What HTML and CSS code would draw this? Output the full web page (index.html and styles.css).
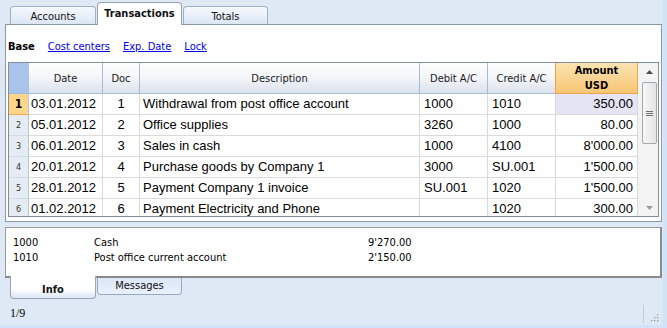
FILE: index.html
```html
<!DOCTYPE html>
<html>
<head>
<meta charset="utf-8">
<title>Transactions</title>
<link rel="stylesheet" href="styles.css">
</head>
<body>
<div class="app">
  <div class="tabs-top">
    <div class="tab w86">Accounts</div>
    <div class="tab active">Transactions</div>
    <div class="tab">Totals</div>
  </div>
  <div class="main-panel">
    <div class="views">
      <span class="view current">Base</span>
      <span class="view link">Cost centers</span>
      <span class="view link">Exp. Date</span>
      <span class="view link">Lock</span>
    </div>
    <div class="grid">
      <div class="sheet">
        <div class="row head">
          <div class="c rh corner"></div>
          <div class="c">Date</div>
          <div class="c">Doc</div>
          <div class="c">Description</div>
          <div class="c">Debit A/C</div>
          <div class="c pre-amt">Credit A/C</div>
          <div class="c amt-h">Amount<br>USD</div>
        </div>
        <div class="row">
          <div class="c rh cur">1</div>
          <div class="c date">03.01.2012</div>
          <div class="c doc">1</div>
          <div class="c desc">Withdrawal from post office account</div>
          <div class="c acc">1000</div>
          <div class="c acc">1010</div>
          <div class="c amt sel">350.00</div>
        </div>
        <div class="row">
          <div class="c rh">2</div>
          <div class="c date">05.01.2012</div>
          <div class="c doc">2</div>
          <div class="c desc">Office supplies</div>
          <div class="c acc">3260</div>
          <div class="c acc">1000</div>
          <div class="c amt">80.00</div>
        </div>
        <div class="row">
          <div class="c rh">3</div>
          <div class="c date">06.01.2012</div>
          <div class="c doc">3</div>
          <div class="c desc">Sales in cash</div>
          <div class="c acc">1000</div>
          <div class="c acc">4100</div>
          <div class="c amt">8'000.00</div>
        </div>
        <div class="row">
          <div class="c rh">4</div>
          <div class="c date">20.01.2012</div>
          <div class="c doc">4</div>
          <div class="c desc">Purchase goods by Company 1</div>
          <div class="c acc">3000</div>
          <div class="c acc">SU.001</div>
          <div class="c amt">1'500.00</div>
        </div>
        <div class="row">
          <div class="c rh">5</div>
          <div class="c date">28.01.2012</div>
          <div class="c doc">5</div>
          <div class="c desc">Payment Company 1 invoice</div>
          <div class="c acc">SU.001</div>
          <div class="c acc">1020</div>
          <div class="c amt">1'500.00</div>
        </div>
        <div class="row">
          <div class="c rh">6</div>
          <div class="c date">01.02.2012</div>
          <div class="c doc">6</div>
          <div class="c desc">Payment Electricity and Phone</div>
          <div class="c acc"></div>
          <div class="c acc">1020</div>
          <div class="c amt">300.00</div>
        </div>
      </div>
      <div class="vscroll">
        <div class="sb-btn up"><svg width="7" height="4" viewBox="0 0 7 4"><path d="M0 4 L3.5 0 L7 4 Z" fill="#4a4a4a"/></svg></div>
        <div class="sb-track">
          <div class="sb-thumb">
            <svg width="7" height="5" viewBox="0 0 7 5"><path d="M0 0.5H7M0 2.5H7M0 4.5H7" stroke="#6e6e6e" stroke-width="1"/></svg>
          </div>
        </div>
        <div class="sb-btn down"><svg width="7" height="4" viewBox="0 0 7 4"><path d="M0 0 L3.5 4 L7 0 Z" fill="#9a9a9a"/></svg></div>
      </div>
    </div>
  </div>
  <div class="info-panel">
    <div class="info-line"><span>1000</span><span>Cash</span><span>9'270.00</span></div>
    <div class="info-line"><span>1010</span><span>Post office current account</span><span>2'150.00</span></div>
  </div>
  <div class="tabs-bottom">
    <div class="btab active">Info</div>
    <div class="btab">Messages</div>
  </div>
  <div class="status">
    <span class="pos">1/9</span>
    <span class="sep"></span>
    <svg class="grip" width="9" height="9" viewBox="0 0 9 9">
      <rect x="6" y="0" width="2" height="2" fill="#a9b4c0"/>
      <rect x="3" y="3" width="2" height="2" fill="#a9b4c0"/>
      <rect x="6" y="3" width="2" height="2" fill="#a9b4c0"/>
      <rect x="0" y="6" width="2" height="2" fill="#a9b4c0"/>
      <rect x="3" y="6" width="2" height="2" fill="#a9b4c0"/>
      <rect x="6" y="6" width="2" height="2" fill="#a9b4c0"/>
      <rect x="7" y="1" width="1" height="1" fill="#ffffff"/>
      <rect x="4" y="4" width="1" height="1" fill="#ffffff"/>
      <rect x="7" y="4" width="1" height="1" fill="#ffffff"/>
      <rect x="1" y="7" width="1" height="1" fill="#ffffff"/>
      <rect x="4" y="7" width="1" height="1" fill="#ffffff"/>
      <rect x="7" y="7" width="1" height="1" fill="#ffffff"/>
    </svg>
  </div>
</div>
</body>
</html>
```

FILE: styles.css
```css
html, body {
  margin: 0;
  padding: 0;
  background: #d3e3f7;
}

.app {
  width: 663px;
  height: 325px;
  border-right: 4px solid #d3e3f7;
  border-bottom: 3px solid #d3e3f7;
  background: #dee9f5;
  display: flex;
  flex-direction: column;
  font-family: "DejaVu Sans Condensed", "DejaVu Sans", sans-serif;
  font-size: 11px;
  color: #111;
  overflow: hidden;
}

/* top tabs */
.tabs-top {
  height: 24px;
  display: flex;
  align-items: flex-end;
  padding-left: 10px;
  gap: 1px;
}

.tab {
  box-sizing: border-box;
  width: 85px;
  height: 18px;
  padding-top: 2px;
  border: 1px solid #9cb0c8;
  border-bottom: none;
  border-radius: 4px 4px 0 0;
  background: linear-gradient(#f6f9fd, #dbe6f5);
  display: flex;
  align-items: center;
  justify-content: center;
}

.tab.w86 { width: 86px; }

.tab.active {
  height: 23px;
  margin-bottom: -1px;
  padding-top: 0;
  padding-bottom: 1px;
  background: #ffffff;
  border-color: #98a4b2;
  font-weight: bold;
  position: relative;
  z-index: 1;
}

/* main panel */
.main-panel {
  box-sizing: border-box;
  margin-left: 5px;
  width: 657px;
  height: 198px;
  border: 1px solid #8b96a3;
  background: #ffffff;
  padding: 13px 2px 4px 2px;
}

.views {
  height: 16px;
  display: flex;
  align-items: center;
  gap: 13px;
  margin-bottom: 8px;
}

.view.current { font-weight: bold; color: #000; }
.view.link { color: #0000ee; text-decoration: underline; }

.grid {
  box-sizing: border-box;
  height: 155px;
  border: 1px solid #828d9b;
  display: flex;
  overflow: hidden;
}

.sheet {
  width: 629px;
  overflow: hidden;
}

.row {
  display: grid;
  grid-template-columns: 20px 74px 37px 280px 68px 68px 82px;
  height: 21px;
}

.c {
  box-sizing: border-box;
  border-right: 1px solid #dadada;
  border-bottom: 1px solid #dadada;
  font-family: "Liberation Sans", Arial, sans-serif;
  font-size: 13px;
  line-height: 20px;
  white-space: nowrap;
  overflow: hidden;
  color: #000;
}

.row.head { height: 31px; }

.row.head .c {
  font-family: "DejaVu Sans Condensed", "DejaVu Sans", sans-serif;
  font-size: 11px;
  line-height: 15px;
  color: #1a1a1a;
  background: linear-gradient(#fefefe, #f4f6f9 45%, #dce3ed);
  border-right-color: #a8bbd2;
  border-bottom-color: #a8bbd2;
  display: flex;
  align-items: center;
  justify-content: center;
  text-align: center;
}

.row.head .c.corner {
  background: #a9c4ea;
  border-right-color: #a9c4ea;
  border-bottom-color: #9fb8dc;
}

.row.head .c.pre-amt { border-right-color: #f0a24a; }

.row.head .c.amt-h {
  background: linear-gradient(#fbe3b0, #f7c674);
  border-right-color: #f0a24a;
  border-bottom-color: #f0a24a;
  font-weight: bold;
  color: #000;
}

.c.rh {
  font-family: "DejaVu Sans Condensed", "DejaVu Sans", sans-serif;
  font-size: 9px;
  color: #333;
  text-align: center;
  background: #e6ecf4;
  border-right-color: #b6c5d8;
  border-bottom-color: #d2dae4;
}

.c.rh.cur {
  background: #fdd68c;
  border-bottom-color: #f3a948;
  font-weight: bold;
  font-size: 12px;
  color: #000;
}

.c.date { padding-left: 2px; }
.c.doc { text-align: center; }
.c.desc { padding-left: 3px; }
.c.acc { padding-left: 4px; }
.c.amt { text-align: right; padding-right: 4px; }
.c.amt.sel { background: #e4e4f5; }

/* scrollbar */
.vscroll {
  width: 20px;
  background: #f3f3f3;
  display: flex;
  flex-direction: column;
}

.sb-btn {
  display: flex;
  align-items: center;
  justify-content: center;
  padding-left: 3px;
}

.sb-btn.up { height: 18px; }
.sb-btn.down { height: 17px; padding-top: 2px; }

.sb-track {
  flex: 1;
  padding: 1px 1px 0 4px;
}

.sb-thumb {
  box-sizing: border-box;
  height: 62px;
  border: 1px solid #a3a8ae;
  border-radius: 2px;
  background: linear-gradient(90deg, #f7f7f7, #e4e4e4);
  display: flex;
  align-items: center;
  justify-content: center;
}

/* info panel */
.info-panel {
  box-sizing: border-box;
  margin: 5px 0 0 5px;
  width: 657px;
  height: 51px;
  border: 1px solid #9a9a9a;
  border-right: 2px solid #8a8a8a;
  border-bottom: 2px solid #8a8a8a;
  background: #ffffff;
  padding: 7px 0 0 7px;
}

.info-line {
  display: grid;
  grid-template-columns: 81px 274px auto;
  height: 15px;
  line-height: 15px;
  color: #000;
}

/* bottom tabs */
.tabs-bottom {
  display: flex;
  align-items: flex-start;
  padding-left: 10px;
  gap: 1px;
  height: 21px;
}

.btab {
  box-sizing: border-box;
  width: 85px;
  height: 17px;
  border: 1px solid #97a9c2;
  border-top: none;
  border-radius: 0 0 4px 4px;
  background: linear-gradient(#dde7f8, #e9f0fb);
  display: flex;
  align-items: center;
  justify-content: center;
  padding-bottom: 1px;
}

.btab.active {
  width: 86px;
  height: 23px;
  margin-top: -2px;
  padding-top: 4px;
  padding-bottom: 0;
  background: linear-gradient(#ffffff 60%, #dbe5f6);
  border-color: #9aa6b5;
  font-weight: bold;
  position: relative;
  z-index: 1;
}

/* status bar */
.status {
  flex: 1;
  display: flex;
  align-items: center;
  padding-left: 10px;
  position: relative;
}

.pos {
  font-family: "Liberation Serif", "Times New Roman", serif;
  font-size: 12px;
  color: #000;
  flex: 1;
  padding-top: 2px;
}

.sep {
  width: 1px;
  height: 18px;
  background: #c6ccd3;
  margin-right: 7px;
  align-self: flex-end;
  margin-bottom: 2px;
}

.grip {
  align-self: flex-end;
  margin-right: 3px;
  margin-bottom: 2px;
}
```
